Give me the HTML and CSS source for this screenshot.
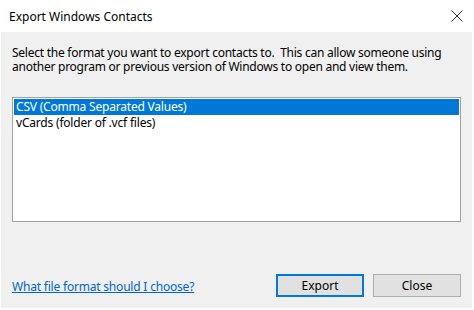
FILE: index.html
```html
<!DOCTYPE html>
<html>
<head>
<meta charset="utf-8">
<link rel="stylesheet" href="styles.css">
</head>
<body>
<div class="window">
  <div class="titlebar">
    <span class="title">Export Windows Contacts</span>
    <svg class="close" width="12" height="12" viewBox="0 0 12 12"><path d="M0.5 0.5 L11.5 11.5 M11.5 0.5 L0.5 11.5" stroke="#333" stroke-width="1" fill="none"/></svg>
  </div>
  <div class="content">
    <p class="desc">Select the format you want to export contacts to.&nbsp; This can allow someone using another program or previous version of Windows to open and view them.</p>
    <div class="listbox">
      <div class="item selected">CSV (Comma Separated Values)</div>
      <div class="item">vCards (folder of .vcf files)</div>
    </div>
    <div class="footer">
      <a class="link" href="#">What file format should I choose?</a>
      <div class="buttons">
        <button class="btn default">Export</button>
        <button class="btn">Close</button>
      </div>
    </div>
  </div>
</div>
</body>
</html>
```
FILE: styles.css
```css
html, body {
  margin: 0;
  padding: 0;
  background: #ffffff;
}
body {
  font-family: "Noto Sans", "Open Sans", sans-serif;
  font-size: 12px;
  color: #000;
}
.window {
  width: 474px;
  height: 310px;
  display: flex;
  flex-direction: column;
}
.titlebar {
  height: 32px;
  display: flex;
  align-items: center;
  justify-content: space-between;
  padding: 0 11px 0 9px;
  box-sizing: border-box;
}
.title {
  font-size: 12px;
  color: #000;
}
.close {
  display: block;
}
.content {
  margin: 0 2px 2px 1px;
  flex: 1;
  background: #f0f0f0;
  padding: 14px 11px 0 11px;
  display: flex;
  flex-direction: column;
}
.desc {
  margin: 0;
  line-height: 14px;
  letter-spacing: -0.25px;
}
.listbox {
  margin-top: 23px;
  height: 125px;
  box-sizing: border-box;
  border: 1px solid #a0a0a0;
  background: #fff;
  padding: 1px;
}
.item {
  height: 16px;
  line-height: 16px;
  padding-left: 2px;
  letter-spacing: -0.2px;
}
.item.selected {
  background: #0078d7;
  color: #fff;
}
.footer {
  margin-top: 52px;
  display: flex;
  align-items: center;
  justify-content: space-between;
}
.link {
  color: #0066cc;
  text-decoration: underline;
  letter-spacing: -0.2px;
  margin-top: 2px;
}
.buttons {
  display: flex;
  gap: 9px;
}
.btn {
  width: 88px;
  height: 23px;
  box-sizing: border-box;
  background: #e1e1e1;
  border: 1px solid #adadad;
  font-family: inherit;
  font-size: 12px;
  color: #000;
  padding: 0;
}
.btn.default {
  border: 2px solid #0078d7;
}
```
